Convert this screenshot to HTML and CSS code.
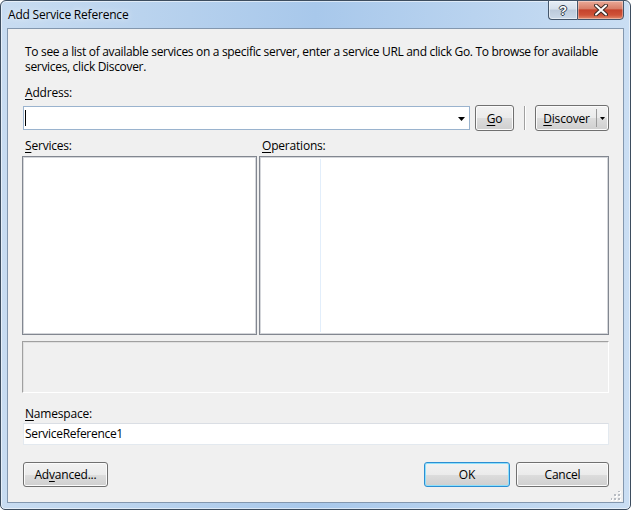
FILE: index.html
```html
<!DOCTYPE html>
<html lang="en">
<head>
    <meta charset="UTF-8">
    <title>Add Service Reference</title>
    <link rel="stylesheet" href="styles.css">
</head>
<body>
    <div class="window">
        <div class="titlebar">
            <div class="title">Add Service Reference</div>
            <div class="caption-buttons">
                <button class="cap-btn cap-help">?</button>
                <button class="cap-btn cap-close">
                    <svg width="14" height="12" viewBox="0 0 14 12">
                        <path d="M2 1.5 L12 10.5 M12 1.5 L2 10.5" stroke="#3c2a24" stroke-width="4" stroke-linecap="round"></path>
                        <path d="M2 1.5 L12 10.5 M12 1.5 L2 10.5" stroke="#ffffff" stroke-width="2" stroke-linecap="round"></path>
                    </svg>
                </button>
            </div>
        </div>

        <div class="client">
            <p class="intro">To see a list of available services on a specific server, enter a service URL and click Go. To browse for available services, click Discover.</p>

            <div class="label"><u>A</u>ddress:</div>
            <div class="address-row">
                <div class="combo">
                    <span class="caret"></span>
                    <svg class="combo-arrow" width="7" height="4" viewBox="0 0 7 4">
                        <path d="M0 0 H7 L3.5 4 Z" fill="#000"></path>
                    </svg>
                </div>
                <button class="btn go-btn"><u>G</u>o</button>
                <div class="separator"></div>
                <div class="btn split-btn">
                    <span class="split-main"><u>D</u>iscover</span>
                    <span class="split-arrow">
                        <svg width="5" height="3" viewBox="0 0 5 3">
                            <path d="M0 0 H5 L2.5 3 Z" fill="#000"></path>
                        </svg>
                    </span>
                </div>
            </div>

            <div class="panes">
                <div class="pane pane-services">
                    <div class="label"><u>S</u>ervices:</div>
                    <div class="list"></div>
                </div>
                <div class="pane pane-ops">
                    <div class="label"><u>O</u>perations:</div>
                    <div class="list ops-list">
                        <div class="col-line"></div>
                    </div>
                </div>
            </div>

            <div class="description"></div>

            <div class="label ns-label"><u>N</u>amespace:</div>
            <div class="textbox">ServiceReference1</div>

            <div class="footer">
                <button class="btn adv-btn">Ad<u>v</u>anced...</button>
                <div class="footer-right">
                    <button class="btn ok-btn">OK</button>
                    <button class="btn cancel-btn">Cancel</button>
                </div>
            </div>

            <svg class="grip" width="10" height="10" viewBox="0 0 10 10">
                <rect x="8" y="0" width="2" height="2" fill="#fff"></rect>
                <rect x="4" y="4" width="2" height="2" fill="#fff"></rect>
                <rect x="8" y="4" width="2" height="2" fill="#fff"></rect>
                <rect x="0" y="8" width="2" height="2" fill="#fff"></rect>
                <rect x="4" y="8" width="2" height="2" fill="#fff"></rect>
                <rect x="8" y="8" width="2" height="2" fill="#fff"></rect>
                <rect x="7" y="-1" width="2" height="2" fill="#b8bcc2"></rect>
                <rect x="3" y="3" width="2" height="2" fill="#b8bcc2"></rect>
                <rect x="7" y="3" width="2" height="2" fill="#b8bcc2"></rect>
                <rect x="-1" y="7" width="2" height="2" fill="#b8bcc2"></rect>
                <rect x="3" y="7" width="2" height="2" fill="#b8bcc2"></rect>
                <rect x="7" y="7" width="2" height="2" fill="#b8bcc2"></rect>
            </svg>
        </div>
    </div>
</body>
</html>
```

FILE: styles.css
```css
* {
    margin: 0;
    padding: 0;
    box-sizing: border-box;
}

body {
    font-family: "Open Sans", "Noto Sans", sans-serif;
    font-size: 12px;
    color: #000;
    background: #fff;
}

u {
    text-decoration: underline;
    text-underline-offset: 2px;
}

/* Window frame */
.window {
    width: 631px;
    height: 510px;
    display: flex;
    flex-direction: column;
    padding: 0 6px 6px;
    border: 1px solid #3d4d5f;
    border-radius: 6px 6px 5px 5px;
    background: linear-gradient(to right, #c8dcf1 0%, #b5d0ed 30%, #a8c8eb 50%, #b9d3ef 75%, #cadef3 100%);
    box-shadow: inset 0 0 0 1px rgba(255, 255, 255, 0.55);
}

.titlebar {
    height: 27px;
    display: flex;
    justify-content: space-between;
    flex-shrink: 0;
}

.title {
    padding: 6px 0 0 1px;
    font-size: 12px;
    line-height: 16px;
    color: #000;
    letter-spacing: -0.2px;
    text-shadow: 0 0 6px rgba(255, 255, 255, 0.9);
}

.caption-buttons {
    display: flex;
    height: 20px;
    margin-top: -1px;
}

.cap-btn {
    height: 20px;
    border: 1px solid #44566b;
    display: flex;
    align-items: center;
    justify-content: center;
    cursor: default;
}

.cap-help {
    width: 29px;
    border-right: none;
    border-radius: 0 0 0 4px;
    background: linear-gradient(#e6edf5 0%, #d5dfeb 45%, #bccadb 50%, #cbd9e8 100%);
    box-shadow: inset 0 0 0 1px rgba(255, 255, 255, 0.5);
    font-family: "Liberation Sans", sans-serif;
    font-weight: bold;
    font-size: 13px;
    color: #fff;
    text-shadow: 1px 0 0 #2f3a48, -1px 0 0 #2f3a48, 0 1px 0 #2f3a48, 0 -1px 0 #2f3a48;
    padding-top: 1px;
}

.cap-close {
    width: 47px;
    border-radius: 0 0 4px 0;
    background: linear-gradient(#eaaa98 0%, #d87f69 42%, #c5432c 50%, #cf5238 78%, #e28b6c 100%);
    box-shadow: inset 0 0 0 1px rgba(255, 255, 255, 0.35);
}

/* Client area */
.client {
    flex: 1;
    position: relative;
    display: flex;
    flex-direction: column;
    padding: 15px 14px 0;
    border: 1px solid #8397ae;
    background: #f0f0f0;
}

.intro {
    padding-left: 3px;
    line-height: 15px;
    letter-spacing: -0.32px;
}

.label {
    padding-left: 3px;
    line-height: 15px;
    margin-top: 11px;
    letter-spacing: -0.2px;
}

/* Address row */
.address-row {
    display: flex;
    height: 26px;
    margin-top: 5px;
}

.combo {
    width: 447px;
    height: 24px;
    margin: 1px 0 0 1px;
    border: 1px solid #9ab3ce;
    background: #fff;
    display: flex;
    align-items: center;
    justify-content: space-between;
    padding: 0 4px 0 1px;
}

.caret {
    width: 1px;
    height: 16px;
    background: #000;
}

.combo-arrow {
    margin-top: 1px;
}

.btn {
    height: 26px;
    border: 1px solid #707070;
    border-radius: 3px;
    background: linear-gradient(#f2f2f2 0%, #ebebeb 50%, #dddddd 50%, #cfcfcf 100%);
    box-shadow: inset 0 0 0 1px #fbfbfb;
    font-family: inherit;
    font-size: 12px;
    color: #000;
    letter-spacing: -0.2px;
}

.go-btn {
    width: 39px;
    margin-left: 5px;
}

.separator {
    width: 2px;
    height: 24px;
    margin: 1px 9px 0 10px;
    border-left: 1px solid #a0a0a0;
    border-right: 1px solid #fff;
}

.split-btn {
    width: 74px;
    display: flex;
    align-items: center;
}

.split-main {
    flex: 1;
    text-align: center;
    padding-left: 1px;
}

.split-arrow {
    width: 12px;
    height: 18px;
    border-left: 1px solid #9a9a9a;
    display: flex;
    align-items: center;
    justify-content: center;
}

/* Lists */
.panes {
    display: flex;
    gap: 2px;
}

.pane-services {
    width: 235px;
}

.pane-ops {
    width: 350px;
}

.pane .label {
    margin-top: 7px;
}

.list {
    height: 179px;
    margin-top: 3px;
    border: 1px solid #828790;
    box-shadow: inset 0 0 0 1px #d4d6da;
    background: #fff;
}

.ops-list {
    padding: 2px 0 2px 60px;
}

.col-line {
    width: 1px;
    height: 100%;
    background: #e2eefb;
}

.description {
    height: 52px;
    margin-top: 6px;
    border-top: 1px solid #a0a0a0;
    border-left: 1px solid #a0a0a0;
    border-right: 1px solid #fff;
    border-bottom: 1px solid #fff;
    box-shadow: inset 1px 1px 0 #e0e0e0;
}

.ns-label {
    margin-top: 13px;
}

.textbox {
    height: 22px;
    margin: 2px 0 0 1px;
    padding: 2px 1px 0;
    border: 1px solid #e3e9ef;
    border-top-color: #dadee4;
    background: #fff;
    line-height: 16px;
    letter-spacing: -0.3px;
}

/* Footer buttons */
.footer {
    display: flex;
    justify-content: space-between;
    margin-top: 17px;
    padding-left: 1px;
}

.footer .btn {
    height: 25px;
}

.adv-btn {
    width: 85px;
}

.footer-right {
    display: flex;
    gap: 6px;
}

.ok-btn {
    width: 86px;
    border-color: #2c8ed2;
    box-shadow: inset 0 0 0 1px #8ee0fb;
}

.cancel-btn {
    width: 93px;
}

.grip {
    position: absolute;
    right: 2px;
    bottom: 1px;
}
```
